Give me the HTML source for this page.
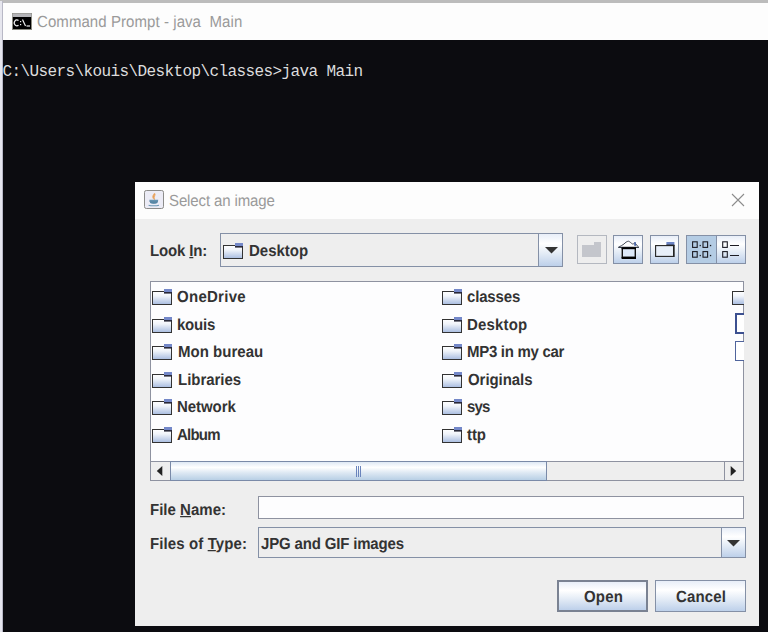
<!DOCTYPE html>
<html><head><meta charset="utf-8">
<style>
*{box-sizing:border-box;margin:0;padding:0}
html,body{width:768px;height:632px;overflow:hidden;background:#0c0c10}
body{position:relative;font-family:"Liberation Sans",sans-serif}
.abs,body>div,body>svg,body>span{position:absolute}
#topstrip{left:0;top:0;width:768px;height:3px;background:#bcbcbc}
#leftstrip{left:0;top:1px;width:3px;height:631px;background:#e6e6ee;border-right:1px solid #b8b8c6}
#cmdtitle{left:3px;top:3px;width:765px;height:37px;background:#fdfdfd}
.tt{font-size:15px;line-height:18px;color:#9a9a9a;white-space:pre;display:inline-block;transform:scaleY(1.07) rotate(0.03deg);transform-origin:0 14px}
#console{left:3px;top:40px;width:765px;height:592px;background:#0c0c10}
#ctext{left:2.5px;top:63px;font-family:"Liberation Mono",monospace;font-size:16px;line-height:18px;letter-spacing:-0.6px;color:#ddd;white-space:pre}
#dlg{left:135px;top:182px;width:624px;height:444px;background:#eeeeee}
#dtitle{left:135px;top:182px;width:624px;height:37px;background:#fdfdfd}
.lbl{font-weight:bold;font-size:15px;line-height:18px;color:#333;white-space:pre;display:inline-block;transform:scaleY(1.07) rotate(0.03deg);transform-origin:0 14px}
.grad{background:linear-gradient(to bottom,#e8eef8 0%,#fff 30%,#e4ecf6 60%,#bdd0ea 100%)}
.btn{border:1px solid #8490a6}
u{text-decoration:underline;text-underline-offset:1px}
</style></head><body>
<div id="console"></div>
<div id="topstrip"></div>
<div id="leftstrip"></div>
<div id="cmdtitle"></div>
<span class="tt" id="t_cmd" style="left:36.90px;top:13px;letter-spacing:0.07px">Command Prompt - java  Main</span>
<!-- cmd icon -->
<svg id="cmdicon" style="left:12px;top:13px" width="20" height="17" viewBox="0 0 20 17">
  <rect x="0" y="0" width="20" height="17" fill="#8a8a80"/>
  <rect x="0.5" y="0.5" width="19" height="3.5" fill="#b4b4b8"/>
  <rect x="1" y="4" width="18" height="12" fill="#000"/>
  <g fill="none" stroke="#eee" stroke-width="1.2">
    <path d="M6.5 7.5 A2.6 3 0 1 0 6.5 12.2"/>
    <path d="M10.5 6.5 L13.5 13"/>
    <path d="M14.5 13 L18 13"/>
  </g>
  <rect x="8" y="8" width="1.2" height="1.2" fill="#eee"/><rect x="8" y="11" width="1.2" height="1.2" fill="#eee"/>
</svg>
<div id="ctext">C:\Users\kouis\Desktop\classes&gt;java Main</div>

<div id="dlg"></div>
<div id="dtitle"></div>
<!-- java icon -->
<svg style="left:144px;top:190px" width="20" height="19" viewBox="0 0 20 19">
  <rect x="0.5" y="0.5" width="19" height="18" rx="1.8" fill="#ececf6" stroke="#8c8c8a"/>
  <path d="M10.6 3.2 C12.2 5 9.2 6.6 10.6 9.6 C8.4 8.4 8 6 10.6 3.2 Z" fill="#e89848" stroke="#eab078" stroke-width="1"/>
  <path d="M5.4 9.8 H14.2 C14.2 12.6 12.8 14 9.8 14 C6.8 14 5.4 12.6 5.4 9.8 Z" fill="#6c98b4"/>
  <path d="M5.4 11.2 H14 M6 12.6 H13.4" stroke="#4c7c9c" stroke-width="0.7"/>
  <path d="M4.6 15.2 C7 16 12.6 16 15 15.2" stroke="#6c98b4" stroke-width="1.1" fill="none"/>
</svg>
<span class="tt" id="t_sel" style="left:169.10px;top:192px;letter-spacing:-0.12px">Select an image</span>
<svg style="left:731px;top:193px" width="14" height="14" viewBox="0 0 14 14"><path d="M1 1 L13 13 M13 1 L1 13" stroke="#8c8c8c" stroke-width="1.1" fill="none"/></svg>

<!-- Look In row -->
<span class="lbl" id="l_look" style="left:149.50px;top:242px;letter-spacing:-0.14px">Look <u>I</u>n:</span>
<div id="combo1" class="btn" style="left:220px;top:233px;width:343px;height:34px;background:#eeeeee"></div>
<div id="combo1b" class="btn grad" style="left:538px;top:233px;width:25px;height:34px"></div>
<svg style="left:545px;top:247px" width="13" height="7" viewBox="0 0 13 7"><path d="M0 0 H13 L6.5 6.5 Z" fill="#333"/></svg>
<svg class="fold" style="left:223px;top:242.6px" width="21" height="18" viewBox="0 0 21 18"><use href="#folder"/></svg>
<span class="lbl" id="l_desk" style="left:249.05px;top:242px;letter-spacing:0.00px">Desktop</span>

<svg width="0" height="0" style="left:0;top:0">
  <defs>
    <linearGradient id="fg" x1="0" y1="0" x2="0" y2="1"><stop offset="0" stop-color="#fff"/><stop offset="0.35" stop-color="#f0f4fa"/><stop offset="1" stop-color="#a8bce0"/></linearGradient>
    <g id="folder">
      <rect x="0.5" y="2.5" width="19" height="13" fill="url(#fg)" stroke="#333" stroke-width="1"/>
      <rect x="12" y="0" width="8" height="3" fill="#7488c8"/>
      <rect x="12" y="3" width="8" height="1.6" fill="#2a2a3a"/>
    </g>
  </defs>
</svg>

<!-- toolbar buttons -->
<div style="left:577px;top:235px;width:30px;height:29px;border:1px solid #b4b8c0;background:#eeeeee"></div>
<svg style="left:582px;top:242px" width="20" height="15" viewBox="0 0 20 15"><path d="M0 3 H12 V0 H19 V15 H0 Z" fill="#c4c6cc"/></svg>
<div class="btn grad" style="left:613px;top:235px;width:30px;height:29px"></div>
<svg style="left:617px;top:239px" width="24" height="21" viewBox="0 0 24 21">
  <path d="M1.5 8.3 C3.5 6.8 5.5 6.4 7 5 C8.3 3.6 9.8 2.4 11.4 2.2 C13 2.6 14 4.2 15.6 5 C16.4 5.4 17 4.6 17.4 3.8 L19.2 5.2 C19.6 6.6 21 7.4 21.8 8.3 Z" fill="#fff" stroke="#333a48" stroke-width="0.9" stroke-linejoin="round"/>
  <rect x="17.2" y="3.2" width="1.8" height="3.6" fill="#4a66a8"/>
  <rect x="5.3" y="9.3" width="13" height="9" fill="#dce8f8" stroke="#111" stroke-width="1.4"/>
  <rect x="4.6" y="17.9" width="14.4" height="2.1" fill="#000"/>
  <rect x="1.4" y="7.9" width="20.4" height="1" fill="#333a48"/>
  <rect x="4.6" y="8.2" width="14.4" height="2" fill="#000"/>
</svg>
<div class="btn grad" style="left:650px;top:235px;width:29px;height:29px"></div>
<svg style="left:655px;top:241px" width="20" height="17" viewBox="0 0 20 17">
  <rect x="0.6" y="4.6" width="18.2" height="10.8" fill="#e8eff9" stroke="#222" stroke-width="1.1"/>
  <rect x="18" y="4" width="1.5" height="12" fill="#222"/>
  <rect x="11.4" y="1" width="8" height="3" fill="#6c84c4"/>
  <rect x="11.4" y="3.6" width="8" height="1.4" fill="#222"/>
</svg>
<div class="btn" style="left:686px;top:235px;width:31px;height:29px;background:#b4cce4"></div>
<div class="btn grad" style="left:716px;top:235px;width:30px;height:29px"></div>
<svg style="left:690px;top:240px" width="52" height="20" viewBox="0 0 52 20" fill="none" stroke="#1c1c24" stroke-width="1.1">
  <rect x="2.6" y="1.8" width="4.6" height="5.6"/><rect x="13" y="1.8" width="4.6" height="5.6"/>
  <rect x="2.6" y="11.6" width="4.6" height="5.6"/><rect x="13" y="11.6" width="4.6" height="5.6"/>
  <g fill="#1c1c24" stroke="none"><rect x="9.6" y="4.9" width="1.3" height="1.3"/><rect x="19.9" y="4.9" width="1.3" height="1.3"/><rect x="9.6" y="14.9" width="1.3" height="1.3"/><rect x="19.9" y="14.9" width="1.3" height="1.3"/></g>
  <rect x="32.7" y="1.8" width="4.6" height="5.6"/><rect x="32.7" y="11.6" width="4.6" height="5.6"/>
  <path d="M40 5.5 H49 M40 15.5 H49" stroke-width="1.2"/>
</svg>

<!-- file list -->
<div id="list" style="left:150px;top:281px;width:594px;height:200px;background:#fdfdfe;border:1px solid #8e92a0;overflow:hidden"></div>
<svg style="left:152px;top:289.0px" width="21" height="18" viewBox="0 0 21 18"><use href="#folder"/></svg>
<span class="lbl" id="a0" style="left:177.40px;top:288.0px;letter-spacing:0.28px">OneDrive</span>
<svg style="left:442px;top:289.0px" width="21" height="18" viewBox="0 0 21 18"><use href="#folder"/></svg>
<span class="lbl" id="b0" style="left:466.85px;top:288.0px;letter-spacing:-0.16px">classes</span>
<svg style="left:152px;top:316.5px" width="21" height="18" viewBox="0 0 21 18"><use href="#folder"/></svg>
<span class="lbl" id="a1" style="left:177.01px;top:315.5px;letter-spacing:-0.24px">kouis</span>
<svg style="left:442px;top:316.5px" width="21" height="18" viewBox="0 0 21 18"><use href="#folder"/></svg>
<span class="lbl" id="b1" style="left:466.72px;top:315.5px;letter-spacing:0.16px">Desktop</span>
<svg style="left:152px;top:344.0px" width="21" height="18" viewBox="0 0 21 18"><use href="#folder"/></svg>
<span class="lbl" id="a2" style="left:177.50px;top:343.0px;letter-spacing:0.03px">Mon bureau</span>
<svg style="left:442px;top:344.0px" width="21" height="18" viewBox="0 0 21 18"><use href="#folder"/></svg>
<span class="lbl" id="b2" style="left:466.95px;top:343.0px;letter-spacing:-0.29px">MP3 in my car</span>
<svg style="left:152px;top:371.5px" width="21" height="18" viewBox="0 0 21 18"><use href="#folder"/></svg>
<span class="lbl" id="a3" style="left:177.50px;top:370.5px;letter-spacing:-0.03px">Libraries</span>
<svg style="left:442px;top:371.5px" width="21" height="18" viewBox="0 0 21 18"><use href="#folder"/></svg>
<span class="lbl" id="b3" style="left:467.54px;top:370.5px;letter-spacing:-0.06px">Originals</span>
<svg style="left:152px;top:399.0px" width="21" height="18" viewBox="0 0 21 18"><use href="#folder"/></svg>
<span class="lbl" id="a4" style="left:177.36px;top:398.0px;letter-spacing:-0.06px">Network</span>
<svg style="left:442px;top:399.0px" width="21" height="18" viewBox="0 0 21 18"><use href="#folder"/></svg>
<span class="lbl" id="b4" style="left:466.85px;top:398.0px;letter-spacing:-0.80px">sys</span>
<svg style="left:152px;top:426.5px" width="21" height="18" viewBox="0 0 21 18"><use href="#folder"/></svg>
<span class="lbl" id="a5" style="left:176.57px;top:425.5px;letter-spacing:-0.78px">Album</span>
<svg style="left:442px;top:426.5px" width="21" height="18" viewBox="0 0 21 18"><use href="#folder"/></svg>
<span class="lbl" id="b5" style="left:467.40px;top:425.5px;letter-spacing:-0.09px">ttp</span>
<div style="left:732px;top:282px;width:12px;height:178px;overflow:hidden;position:absolute">
<svg style="position:absolute;left:0;top:7px" width="21" height="18" viewBox="0 0 21 18"><use href="#folder"/></svg>
<div style="position:absolute;left:3px;top:31px;width:16px;height:21px;border:2px solid #3c5090;border-right:0;background:#fff"></div>
<div style="position:absolute;left:3px;top:59px;width:16px;height:20px;border:1.5px solid #50649c;border-right:0;background:#fff"></div>
</div>
<div style="left:151px;top:461px;width:592px;height:19px;background:#eeeeee;border-top:1px solid #8e92a0"></div>
<div style="left:151px;top:461px;width:20px;height:19px;border:1px solid #8e92a0;border-left:0;border-bottom:0;background:#eeeeee"></div>
<svg style="left:156px;top:466px" width="7" height="10" viewBox="0 0 7 10"><path d="M6.3 0 V10 L0.8 5 Z" fill="#222"/></svg>
<div style="left:170px;top:461px;width:377px;height:19.5px;border:1px solid #7a8aa8;background:linear-gradient(to bottom,#dfe9f5 0%,#fff 30%,#dde8f3 60%,#b8cfe5 100%)"></div>
<div style="left:356px;top:466px;width:5px;height:11px;border-left:1px solid #6a84bc;border-right:1px solid #6a84bc"></div>
<div style="left:358px;top:466px;width:1px;height:11px;background:#6a84bc"></div>
<div style="left:724px;top:461px;width:19px;height:19px;border:1px solid #8e92a0;border-right:0;border-bottom:0;background:#eeeeee"></div>
<svg style="left:730px;top:466px" width="7" height="10" viewBox="0 0 7 10"><path d="M0.7 0 V10 L6.2 5 Z" fill="#222"/></svg>

<span class="lbl" id="l_fn" style="left:150.00px;top:501px;letter-spacing:0.02px">File <u>N</u>ame:</span>
<div style="left:258px;top:496px;width:486px;height:23px;background:#fdfdfe;border:1px solid #8e92a0"></div>
<span class="lbl" id="l_ft" style="left:150.10px;top:535px;letter-spacing:0.11px">Files of <u>T</u>ype:</span>
<div class="btn" style="left:258px;top:527px;width:488px;height:31px;background:#eeeeee"></div>
<div class="btn grad" style="left:721px;top:527px;width:25px;height:31px"></div>
<svg style="left:727px;top:540px" width="13" height="7" viewBox="0 0 13 7"><path d="M0 0 H13 L6.5 6.5 Z" fill="#333"/></svg>
<span class="lbl" id="l_jpg" style="left:261.30px;top:535px;letter-spacing:-0.17px">JPG and GIF images</span>
<div class="grad" style="left:557px;top:580px;width:91px;height:32px;border:2px solid #7a8292"></div>
<span class="lbl" id="l_open" style="left:584.28px;top:588px;letter-spacing:0.16px">Open</span>
<div class="btn grad" style="left:655px;top:580px;width:91px;height:32px"></div>
<span class="lbl" id="l_cancel" style="left:676.10px;top:588px;letter-spacing:0.17px">Cancel</span>

</body></html>
